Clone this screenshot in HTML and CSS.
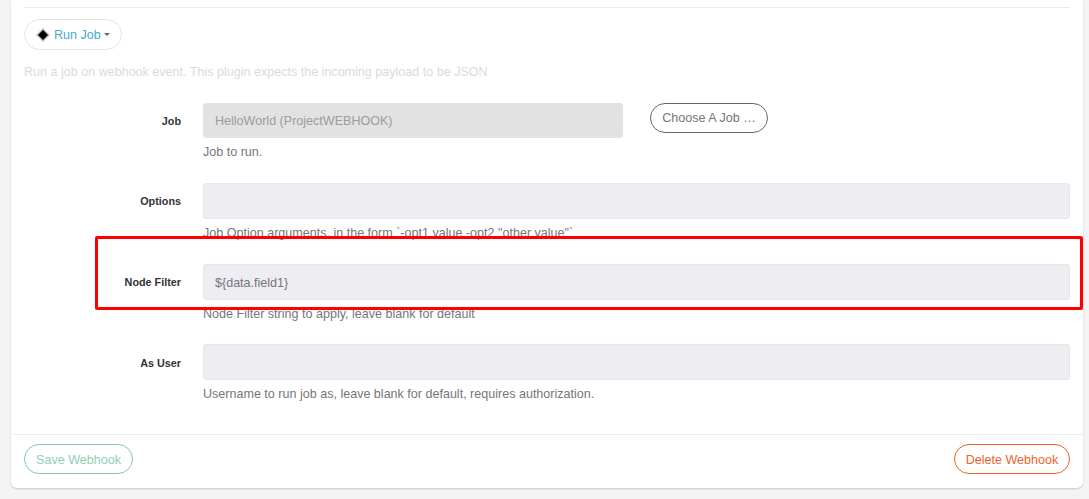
FILE: index.html
```html
<!DOCTYPE html>
<html lang="en">
<head>
<meta charset="utf-8">
<title>Webhook</title>
<link rel="stylesheet" href="styles.css">
</head>
<body>
<main class="card">
  <div class="content">
    <hr class="rule">
    <button class="plugin-btn" type="button">
      <svg class="diamond" width="14" height="14" viewBox="0 0 14 14" aria-hidden="true">
        <path d="M7 0 14 7 7 14 0 7Z" fill="#c4c4c4"/>
        <path d="M7 2 12 7 7 12 2 7Z" fill="#000"/>
      </svg>
      <span class="plugin-name">Run Job</span>
      <span class="caret"></span>
    </button>
    <p class="intro">Run a job on webhook event. This plugin expects the incoming payload to be JSON</p>
    <div class="row row-job">
      <label class="label">Job</label>
      <div class="field">
        <div class="job-line">
          <div class="input input-job">HelloWorld (ProjectWEBHOOK)</div>
          <button class="choose-btn" type="button">Choose A Job …</button>
        </div>
        <p class="help">Job to run.</p>
      </div>
    </div>
    <div class="row row-options">
      <label class="label">Options</label>
      <div class="field">
        <div class="input"></div>
        <p class="help">Job Option arguments, in the form `-opt1 value -opt2 "other value"`</p>
      </div>
    </div>
    <div class="row row-node">
      <label class="label">Node Filter</label>
      <div class="field">
        <div class="input">${data.field1}</div>
        <p class="help">Node Filter string to apply, leave blank for default</p>
      </div>
    </div>
    <div class="row row-user">
      <label class="label label-user">As User</label>
      <div class="field">
        <div class="input"></div>
        <p class="help">Username to run job as, leave blank for default, requires authorization.</p>
      </div>
    </div>
  </div>
  <footer class="footer">
    <button class="pill pill-save" type="button">Save Webhook</button>
    <button class="pill pill-delete" type="button">Delete Webhook</button>
  </footer>
</main>
<div class="highlight"></div>
</body>
</html>
```
FILE: styles.css
```css
* { box-sizing: border-box; }
html, body { margin: 0; height: 499px; overflow: hidden; }
body {
  background: #f4f4f4;
  font-family: "Liberation Sans", Arial, sans-serif;
  font-size: 12.55px;
  color: #6a6a6a;
  position: relative;
}
button { font-family: inherit; cursor: pointer; background: #fff; }
p { margin: 0; }

.card {
  width: 1072px;
  height: 488px;
  margin-left: 11px;
  background: #fff;
  border-radius: 0 0 6px 6px;
  box-shadow: 0 1px 2px rgba(0, 0, 0, 0.18);
  display: flex;
  flex-direction: column;
}
.content { flex: 1; padding: 7px 13px 0; }
.rule { margin: 0 0 11px; border: 0; border-top: 1px solid #eaeaea; }

.plugin-btn {
  width: 98px;
  height: 31px;
  padding: 0 0 0 11px;
  border: 1px solid #e3e3e3;
  border-radius: 16px;
  display: flex;
  align-items: center;
  font-size: 12.55px;
}
.diamond { flex: none; margin: 1px 4px 0 0; }
.plugin-name { color: #45abc9; }
.caret {
  margin-left: 3px;
  border-top: 3px solid #666;
  border-left: 3px solid transparent;
  border-right: 3px solid transparent;
}
.intro { margin-top: 15px; height: 15px; line-height: 15px; font-size: 12.55px; color: #dcdad8; }

.row { display: flex; }
.row-job { margin-top: 23px; height: 80px; }
.row-options { height: 81px; }
.row-node { height: 80px; }
.row-user { height: 70px; }
.label {
  width: 157px;
  margin-right: 22px;
  padding-top: 12px;
  text-align: right;
  font-size: 10.8px;
  line-height: 13px;
  font-weight: 700;
  color: #333;
}
.label-user { padding-top: 13px; }
.field { flex: 1; min-width: 0; }
.input {
  height: 36px;
  padding: 0 11px;
  background: #eeedf2;
  border: 1px solid #e7e7eb;
  border-radius: 3px;
  font-size: 12.55px;
  line-height: 36px;
  color: #76757a;
}
.job-line { display: flex; align-items: flex-start; }
.input-job {
  width: 420px;
  height: 35px;
  margin-right: 27px;
  background: #e2e2e2;
  border-color: #e2e2e2;
  color: #9c9a9c;
  line-height: 35px;
}
.choose-btn {
  width: 118px;
  height: 30px;
  padding: 0;
  border: 1px solid #6b665f;
  border-radius: 15px;
  font-size: 12.55px;
  color: #7a7570;
}
.help { margin-top: 6px; font-size: 12.55px; line-height: 16px; color: #76757a; }

.footer {
  height: 54px;
  padding: 9px 13px 0;
  border-top: 1px solid #eeeeee;
  display: flex;
  justify-content: space-between;
  align-items: flex-start;
}
.pill {
  height: 30px;
  padding: 1px 0 0;
  border-radius: 15px;
  font-size: 12.55px;
  background: #fff;
}
.pill-save { width: 109px; border: 1px solid #7fcb9f; color: #8ed1b0; }
.pill-delete { width: 116px; border: 1px solid #f0622d; color: #f0622d; }

.highlight {
  position: absolute;
  left: 95px;
  top: 236px;
  width: 988px;
  height: 74px;
  border: 3px solid #ff0000;
  border-radius: 2px;
}
```
